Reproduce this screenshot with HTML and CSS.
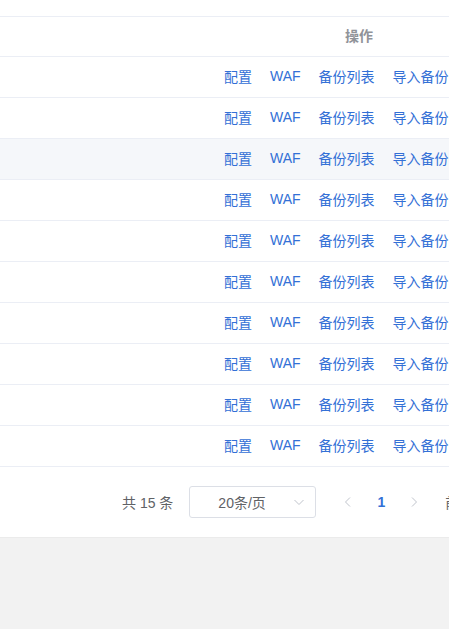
FILE: index.html
```html
<!DOCTYPE html>
<html lang="zh">
<head>
<meta charset="utf-8">
<link rel="stylesheet" href="styles.css">
</head>
<body>
<div class="page">
  <div class="panel">
    <div class="table">
      <div class="row head">
        <div class="col-main"></div>
        <div class="col-op"><span class="th">操作</span></div>
      </div>
      <div class="row"><div class="col-main"></div><div class="col-op links"><a>配置</a><a>WAF</a><a>备份列表</a><a>导入备份</a><a>删除</a></div></div>
      <div class="row"><div class="col-main"></div><div class="col-op links"><a>配置</a><a>WAF</a><a>备份列表</a><a>导入备份</a><a>删除</a></div></div>
      <div class="row hover"><div class="col-main"></div><div class="col-op links"><a>配置</a><a>WAF</a><a>备份列表</a><a>导入备份</a><a>删除</a></div></div>
      <div class="row"><div class="col-main"></div><div class="col-op links"><a>配置</a><a>WAF</a><a>备份列表</a><a>导入备份</a><a>删除</a></div></div>
      <div class="row"><div class="col-main"></div><div class="col-op links"><a>配置</a><a>WAF</a><a>备份列表</a><a>导入备份</a><a>删除</a></div></div>
      <div class="row"><div class="col-main"></div><div class="col-op links"><a>配置</a><a>WAF</a><a>备份列表</a><a>导入备份</a><a>删除</a></div></div>
      <div class="row"><div class="col-main"></div><div class="col-op links"><a>配置</a><a>WAF</a><a>备份列表</a><a>导入备份</a><a>删除</a></div></div>
      <div class="row"><div class="col-main"></div><div class="col-op links"><a>配置</a><a>WAF</a><a>备份列表</a><a>导入备份</a><a>删除</a></div></div>
      <div class="row"><div class="col-main"></div><div class="col-op links"><a>配置</a><a>WAF</a><a>备份列表</a><a>导入备份</a><a>删除</a></div></div>
      <div class="row"><div class="col-main"></div><div class="col-op links"><a>配置</a><a>WAF</a><a>备份列表</a><a>导入备份</a><a>删除</a></div></div>
    </div>
    <div class="pager">
      <span class="total">共 15 条</span>
      <div class="select">
        <span class="select-text">20条/页</span>
        <svg class="select-arrow" width="12" height="12" viewBox="0 0 12 12"><path d="M1.5 4 L6 8.5 L10.5 4" fill="none" stroke="#c0c4cc" stroke-width="1"/></svg>
      </div>
      <span class="btn-nav"><svg width="10" height="12" viewBox="0 0 10 12"><path d="M7 1.5 L2.5 6 L7 10.5" fill="none" stroke="#c0c4cc" stroke-width="1"/></svg></span>
      <span class="page-num">1</span>
      <span class="btn-nav"><svg width="10" height="12" viewBox="0 0 10 12"><path d="M3 1.5 L7.5 6 L3 10.5" fill="none" stroke="#c0c4cc" stroke-width="1"/></svg></span>
      <span class="jump">前往</span>
    </div>
  </div>
</div>
</body>
</html>
```
FILE: styles.css
```css
html, body {
  margin: 0;
  padding: 0;
  background: #f2f2f2;
  overflow: hidden;
  width: 449px;
  height: 629px;
}
body {
  font-family: "Liberation Sans", "Noto Sans CJK SC", Arial, sans-serif;
}
.page {
  width: 700px;
}
.panel {
  background: #ffffff;
  padding-top: 16px;
  border-bottom: 1px solid #ebebeb;
}
.table {
  border-top: 1px solid #ebeef5;
}
.row {
  display: flex;
  height: 40px;
  align-items: center;
  border-bottom: 1px solid #ebeef5;
  background: #ffffff;
}
.row.head {
  height: 39px;
}
.row.hover {
  background: #f5f7fa;
}
.col-main {
  width: 224px;
  flex: none;
}
.col-op {
  display: flex;
  align-items: center;
  padding-bottom: 2px;
}
.head .col-op {
  padding-bottom: 4px;
}
.th {
  margin-left: 121px;
  font-size: 14px;
  font-weight: bold;
  color: #909399;
}
.links {
  gap: 18px;
  font-size: 14px;
  color: #3370d6;
}
.links a {
  cursor: pointer;
}
.pager {
  display: flex;
  align-items: center;
  padding: 19px 0 19px 122px;
  font-size: 13px;
  color: #606266;
}
.total {
  margin-right: 16px;
  font-size: 14px;
}
.select {
  width: 125px;
  height: 30px;
  border: 1px solid #dcdfe6;
  border-radius: 3px;
  display: flex;
  align-items: center;
  margin-right: 21px;
}
.select-text {
  margin-left: 28px;
  font-size: 14px;
  color: #606266;
}
.select-arrow {
  margin-left: auto;
  margin-right: 10px;
}
.btn-nav {
  width: 22px;
  height: 28px;
  display: flex;
  align-items: center;
  justify-content: center;
}
.page-num {
  width: 44px;
  text-align: center;
  font-size: 14px;
  font-weight: bold;
  color: #3370d6;
}
.jump {
  margin-left: 20px;
  font-size: 14px;
}
```
